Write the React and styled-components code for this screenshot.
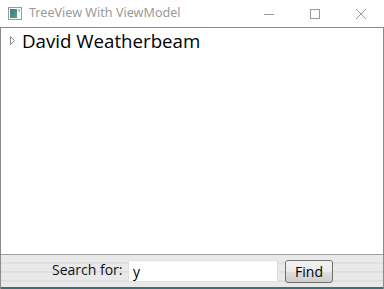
import React from "react";
import styled, { createGlobalStyle } from "styled-components";

const Global = createGlobalStyle`
  html, body { margin: 0; padding: 0; background: #fff; }
  #root { width: 384px; height: 289px; }
`;

const Window = styled.div`
  width: 384px;
  height: 289px;
  display: flex;
  flex-direction: column;
  box-sizing: border-box;
  background: #fff;
  font-family: "Open Sans", "Noto Sans", sans-serif;
  overflow: hidden;
`;

const TitleBar = styled.div`
  height: 27px;
  display: flex;
  align-items: center;
  background: #fff;
  border-bottom: 1px solid #8a8a8a;
`;

const AppIcon = styled.svg`
  margin-left: 8px;
  width: 14px;
  height: 13px;
  flex: none;
`;

const Title = styled.div`
  margin-left: 7px;
  margin-top: -2px;
  font-family: "Noto Sans", sans-serif;
  font-size: 12.6px;
  color: #9a9a9a;
  flex: 1;
`;

const Controls = styled.div`
  display: flex;
  height: 100%;
`;

const CtrlBtn = styled.div`
  width: 46px;
  height: 100%;
  display: flex;
  align-items: center;
  justify-content: center;
`;

const Body = styled.div`
  flex: 1;
  display: flex;
  flex-direction: column;
  border-left: 1px solid #8a8a8a;
  border-right: 1px solid #8a8a8a;
`;

const Tree = styled.div`
  flex: 1;
  padding-top: 1px;
  background: #fff;
  border-bottom: 1px solid #a0a0a0;
`;

const TreeRow = styled.div`
  display: flex;
  align-items: center;
  height: 22px;
`;

const Expander = styled.svg`
  margin-left: 8px;
  width: 7px;
  height: 9px;
  flex: none;
`;

const NodeLabel = styled.span`
  margin-left: 6px;
  font-family: "Open Sans", "Noto Sans", sans-serif;
  font-size: 18.7px;
  color: #000;
`;

const SearchBar = styled.div`
  height: 32px;
  display: flex;
  align-items: center;
  padding-left: 51px;
  background:
    repeating-linear-gradient(
      to bottom,
      #e9e9e9 0px,
      #e9e9e9 7px,
      #dcdcdc 7px,
      #e2e2e2 9px
    );
  border-bottom: 2px solid #3d6f73;
`;

const Label = styled.span`
  font-family: "Open Sans", "Noto Sans", sans-serif;
  font-size: 14px;
  color: #111;
  margin-top: -3px;
  width: 76px;
`;

const Input = styled.div`
  width: 150px;
  height: 22px;
  box-sizing: border-box;
  background: #fff;
  border: 1px solid #e0e0e0;
  display: flex;
  align-items: center;
  padding-left: 4px;
  font-family: "Open Sans", "Noto Sans", sans-serif;
  font-size: 14px;
  color: #000;
`;

const Button = styled.div`
  margin-left: 7px;
  width: 48px;
  height: 23px;
  box-sizing: border-box;
  border: 1px solid #707070;
  border-radius: 3px;
  background: linear-gradient(to bottom, #f2f2f2 0%, #ebebeb 50%, #dddddd 51%, #cfcfcf 100%);
  display: flex;
  align-items: center;
  justify-content: center;
  font-family: "Open Sans", "Noto Sans", sans-serif;
  font-size: 14px;
  color: #000;
`;

export default function App() {
  return (
    <>
      <Global />
      <Window>
        <TitleBar>
          <AppIcon viewBox="0 0 14 13">
            <rect x="0.5" y="0.5" width="13" height="12" fill="#fff" stroke="#9a9a9a" />
            <defs>
              <linearGradient id="ig" x1="0" y1="0" x2="1" y2="1">
                <stop offset="0" stopColor="#3a7a9a" />
                <stop offset="1" stopColor="#4caa6a" />
              </linearGradient>
            </defs>
            <rect x="2" y="2" width="7" height="9" fill="url(#ig)" />
            <rect x="10" y="2" width="2" height="3" fill="#c0c0c0" />
          </AppIcon>
          <Title>TreeView With ViewModel</Title>
          <Controls>
            <CtrlBtn>
              <svg width="10" height="10" viewBox="0 0 10 10">
                <line x1="0" y1="5.5" x2="10" y2="5.5" stroke="#999" strokeWidth="1" />
              </svg>
            </CtrlBtn>
            <CtrlBtn>
              <svg width="10" height="10" viewBox="0 0 10 10">
                <rect x="0.5" y="0.5" width="9" height="9" fill="none" stroke="#999" strokeWidth="1" />
              </svg>
            </CtrlBtn>
            <CtrlBtn>
              <svg width="10" height="10" viewBox="0 0 10 10">
                <path d="M0 0 L10 10 M10 0 L0 10" stroke="#999" strokeWidth="1" />
              </svg>
            </CtrlBtn>
          </Controls>
        </TitleBar>
        <Body>
          <Tree>
            <TreeRow>
              <Expander viewBox="0 0 7 9">
                <path d="M1.5 0.5 L5.5 4.5 L1.5 8.5 Z" fill="#fff" stroke="#8c8c8c" strokeWidth="1" />
              </Expander>
              <NodeLabel>David Weatherbeam</NodeLabel>
            </TreeRow>
          </Tree>
          <SearchBar>
            <Label>Search for:</Label>
            <Input>y</Input>
            <Button>Find</Button>
          </SearchBar>
        </Body>
      </Window>
    </>
  );
}
